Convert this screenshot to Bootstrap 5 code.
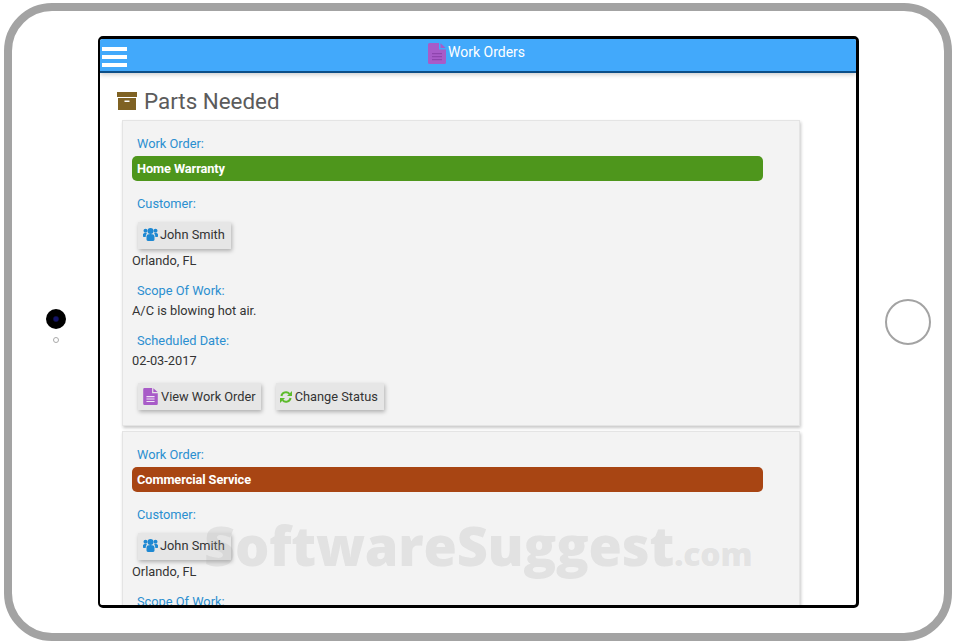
<!DOCTYPE html>
<html lang="en">
<head>
<meta charset="utf-8">
<title>Work Orders</title>
<link rel="stylesheet" href="https://cdn.jsdelivr.net/npm/bootstrap@5.3.0/dist/css/bootstrap.min.css">
<style>
html,body{margin:0;height:644px;overflow:hidden;background:#fff}
body{font-family:Roboto,"Liberation Sans",sans-serif;font-size:12.8px;line-height:20px;color:#333}
.tablet{box-sizing:border-box;width:948px;height:638px;margin:3px 0 0 4px;border:8px solid #a3a3a3;border-radius:48px;position:relative}
.side-l{width:86px;flex:none;padding-top:7px}
.side-r{flex:1;padding-left:14px}
.lens{width:20px;height:20px;border-radius:50%;background:radial-gradient(circle,#14146a 0 2px,#000 3.500px);display:block;margin-left:1px}
.lens-dot{width:6px;height:6px;border-radius:50%;border:1px solid #aaa;margin:8px 0 0 1px}
.home{width:46px;height:46px;border:2.500px solid #a3a3a3;border-radius:50%;margin-left:-1px}
.screen{box-sizing:border-box;width:761px;height:572px;margin-top:-1px;border:solid #000;border-width:3px 3px 3px 2px;border-radius:5px;overflow:hidden;background:#fff;flex:none}
.topbar{height:34px;flex:none;background:#42a9fb;border-bottom:2px solid #0d4f88;box-shadow:0 2px 4px rgba(0,0,0,.18);color:#fff;font-size:14px;position:relative}
.burger{width:25px;padding:8px 0 0 2px;box-sizing:content-box}
.burger span{display:block;height:4px;background:#fff;margin-bottom:4px}
.ttl{position:absolute;left:328px;top:4px;gap:2px;line-height:20px}
.ttl b{font-weight:400;margin-top:-1px}
.page-h{font-size:22.400px;line-height:26px;color:#5b5b5b;margin:0;padding:15px 0 0 17px;gap:7px;font-weight:400;flex:none}
.wo{width:678px;margin:0 0 5px 22px;background:#f3f3f3;border:1px solid #e4e4e4;border-radius:0;box-shadow:1px 2px 3px rgba(0,0,0,.22);padding:13px 9px 15px;color:#333;flex:none}
.first-wo{margin-top:6px}
.lbl{color:#2b8fd0;padding-left:5px;height:20px}
.band{width:631px;height:25px;border-radius:5px;color:#fff;font-weight:700;line-height:25px;padding-left:5px;margin-top:2px;letter-spacing:-.1px}
.green{background:#4e961c}
.brown{background:#a84513}
.act{background:#e6e6e6;border:0;border-radius:0;box-shadow:1px 2px 4px rgba(0,0,0,.28);font-size:12.800px;line-height:20px;color:#333;padding:3px 6px 4px 5px;height:27px;gap:2px}
.act:hover{background:#e6e6e6;color:#333}
.act-wide{gap:3px;padding-top:4px;padding-bottom:3px;padding-right:5px}
.act-sync{gap:3px;padding-top:4px;padding-bottom:3px;padding-left:4px;padding-right:6px}
.cust-row{margin-top:8px;padding-left:6px}
.city{margin-top:2px}
.gap-a{margin-top:13px}
.gap-c{margin-top:10px}
.act-row{margin-top:12px;padding-left:6px;gap:15px}
.mark-wm{position:absolute;left:192px;top:501px;color:rgba(170,170,170,.24);font:800 54px/66px "Open Sans","Liberation Sans",sans-serif;letter-spacing:-.2px;pointer-events:none;white-space:nowrap}
.mark-wm i{font-style:normal;font-size:32px}
</style>
</head>
<body>
<div class="tablet d-flex align-items-center">
  <div class="side-l d-flex flex-column align-items-center">
    <div class="lens"></div>
    <div class="lens-dot"></div>
  </div>
  <div class="screen d-flex flex-column">
    <div class="topbar">
      <div class="burger"><span></span><span></span><span></span></div>
      <div class="ttl d-flex">
        <svg width="18" height="21" viewBox="0 0 18 21"><path fill="#a85bc8" d="M1.500 0H11V6.500H18V19.500A1.500 1.500 0 0 1 16.500 21H1.500A1.500 1.500 0 0 1 0 19.500V1.500A1.500 1.500 0 0 1 1.500 0Z"/><path fill="#a85bc8" d="M12.500 .3 17.700 5H12.500Z"/><path fill="#8e44ad" d="M4 10h10v1.300H4zM4 13h10v1.300H4zM4 16h10v1.300H4z"/></svg>
        <b>Work Orders</b>
      </div>
    </div>
    <h1 class="page-h d-flex align-items-center">
      <svg width="20" height="18" viewBox="0 0 20 18"><path fill="#7f6223" d="M0 0H20V5H0ZM1 6H19V18H1Z"/><path fill="#fff" d="M7.500 8.500h5v1.500h-5z"/></svg>
      Parts Needed
    </h1>
    <div class="card wo first-wo">
      <div class="lbl">Work Order:</div>
      <div class="band green">Home Warranty</div>
      <div class="lbl gap-a">Customer:</div>
      <div class="cust-row"><button class="btn act d-inline-flex align-items-center" type="button">
        <svg width="15" height="13" viewBox="0 0 15 13"><g fill="#1e88d2"><circle cx="7.500" cy="3" r="3"/><circle cx="2.500" cy="2.800" r="2"/><circle cx="12.500" cy="2.800" r="2"/><path d="M3.500 8.500C3.500 6.800 5 6 7.500 6S11.500 6.800 11.500 8.500V11.500C11.500 12.500 10.500 13 9 13H6C4.500 13 3.500 12.500 3.500 11.500Z"/><path d="M0 6.500C0 5.500 1 5 2.500 5 3.200 5 3.800 5.200 4.200 5.500 3.200 6.200 2.700 7.200 2.700 9H1C.3 9 0 8.600 0 8ZM15 6.500C15 5.500 14 5 12.500 5 11.800 5 11.200 5.200 10.800 5.500 11.800 6.200 12.300 7.200 12.300 9H14C14.700 9 15 8.600 15 8Z"/></g></svg>
        John Smith</button></div>
      <div class="city">Orlando, FL</div>
      <div class="lbl gap-c">Scope Of Work:</div>
      <div>A/C is blowing hot air.</div>
      <div class="lbl gap-c">Scheduled Date:</div>
      <div>02-03-2017</div>
      <div class="d-flex act-row">
        <button class="btn act act-wide d-inline-flex align-items-center" type="button">
          <svg width="15" height="17" viewBox="0 0 18 21"><path fill="#a85bc8" d="M1.500 0H11V6.500H18V19.500A1.500 1.500 0 0 1 16.500 21H1.500A1.500 1.500 0 0 1 0 19.500V1.500A1.500 1.500 0 0 1 1.500 0Z"/><path fill="#a85bc8" d="M12.500 .3 17.700 5H12.500Z"/><path fill="#f0e4f6" d="M4 10h10v1.300H4zM4 13h10v1.300H4zM4 16h10v1.300H4z"/></svg>
          View Work Order</button>
        <button class="btn act act-sync d-inline-flex align-items-center" type="button">
          <svg width="12" height="12" viewBox="0 0 12 12"><g fill="none" stroke="#5dbb2c" stroke-width="2"><path d="M1.400 5A4.700 4.700 0 0 1 9.500 2.800"/><path d="M10.600 7A4.700 4.700 0 0 1 2.500 9.200"/></g><path fill="#5dbb2c" d="M12 0V5H7ZM0 12V7H5Z"/></svg>
          Change Status</button>
      </div>
    </div>
    <div class="card wo">
      <div class="lbl">Work Order:</div>
      <div class="band brown">Commercial Service</div>
      <div class="lbl gap-a">Customer:</div>
      <div class="cust-row"><button class="btn act d-inline-flex align-items-center" type="button">
        <svg width="15" height="13" viewBox="0 0 15 13"><g fill="#1e88d2"><circle cx="7.500" cy="3" r="3"/><circle cx="2.500" cy="2.800" r="2"/><circle cx="12.500" cy="2.800" r="2"/><path d="M3.500 8.500C3.500 6.800 5 6 7.500 6S11.500 6.800 11.500 8.500V11.500C11.500 12.500 10.500 13 9 13H6C4.500 13 3.500 12.500 3.500 11.500Z"/><path d="M0 6.500C0 5.500 1 5 2.500 5 3.200 5 3.800 5.200 4.200 5.500 3.200 6.200 2.700 7.200 2.700 9H1C.3 9 0 8.600 0 8ZM15 6.500C15 5.500 14 5 12.500 5 11.800 5 11.200 5.200 10.800 5.500 11.800 6.200 12.300 7.200 12.300 9H14C14.700 9 15 8.600 15 8Z"/></g></svg>
        John Smith</button></div>
      <div class="city">Orlando, FL</div>
      <div class="lbl gap-c">Scope Of Work:</div>
    </div>
  </div>
  <div class="side-r d-flex justify-content-center"><div class="home"></div></div>
  <div class="mark-wm">SoftwareSuggest<i>.com</i></div>
</div>
</body>
</html>
